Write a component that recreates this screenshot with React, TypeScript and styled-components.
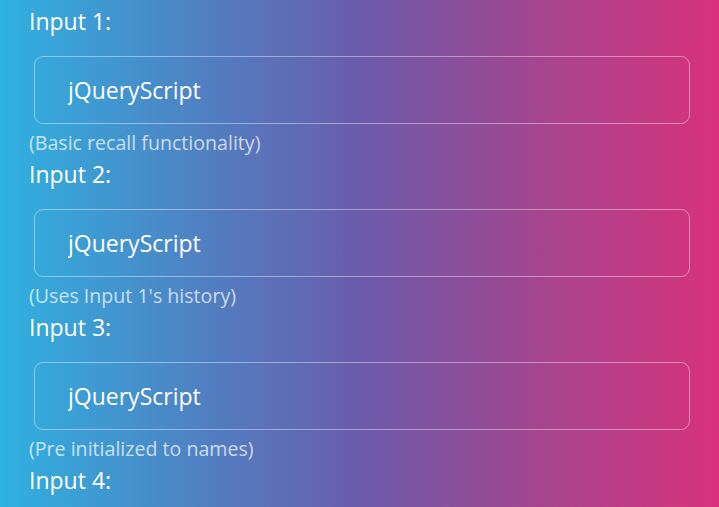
import React from 'react';
import styled, { createGlobalStyle } from 'styled-components';

const GlobalStyle = createGlobalStyle`
  html, body {
    margin: 0;
    height: 100%;
    overflow: hidden;
  }

  body {
    background: linear-gradient(to right, #2fb1e0 0%, #5678bd 33%, #6a5cab 50%, #a5468f 75%, #d8317c 100%);
    font-family: "Open Sans", "Noto Sans", sans-serif;
    color: #fff;
  }
`;

const Page = styled.main`
  padding: 6px 29px 0 29px;
`;

const Field = styled.section`
  display: flex;
  flex-direction: column;
  align-items: stretch;

  & + & {
    margin-top: 5px;
  }
`;

const FieldLabel = styled.label`
  font-size: 23px;
  line-height: 30px;
  color: #fff;
`;

const TextInput = styled.input`
  box-sizing: border-box;
  height: 68px;
  margin: 20px 0 0 5px;
  width: 656px;
  padding: 0 0 0 33px;

  background: transparent;
  border: 1px solid rgba(255, 255, 255, 0.42);
  border-radius: 9px;
  outline: none;

  color: #fff;
  font-family: "Open Sans", "Noto Sans", sans-serif;
  font-size: 23px;
`;

const Hint = styled.div`
  margin-top: 8px;
  font-size: 19.6px;
  line-height: 22px;
  color: rgba(255, 255, 255, 0.72);
`;

type FieldDef = {
  id: string,
  label: string,
  hint?: string
};

const fields: FieldDef[] = [
  { id: 'input1', label: 'Input 1:', hint: '(Basic recall functionality)' },
  { id: 'input2', label: 'Input 2:', hint: "(Uses Input 1's history)" },
  { id: 'input3', label: 'Input 3:', hint: '(Pre initialized to names)' },
  { id: 'input4', label: 'Input 4:' },
];

export default function App() {
  return <>
    <GlobalStyle />
    <Page>
      {fields.map((f) => (
        <Field key={f.id}>
          <FieldLabel htmlFor={f.id}>{f.label}</FieldLabel>
          <TextInput id={f.id} type="text" defaultValue="jQueryScript" />
          {f.hint && <Hint>{f.hint}</Hint>}
        </Field>
      ))}
    </Page>
  </>;
}
